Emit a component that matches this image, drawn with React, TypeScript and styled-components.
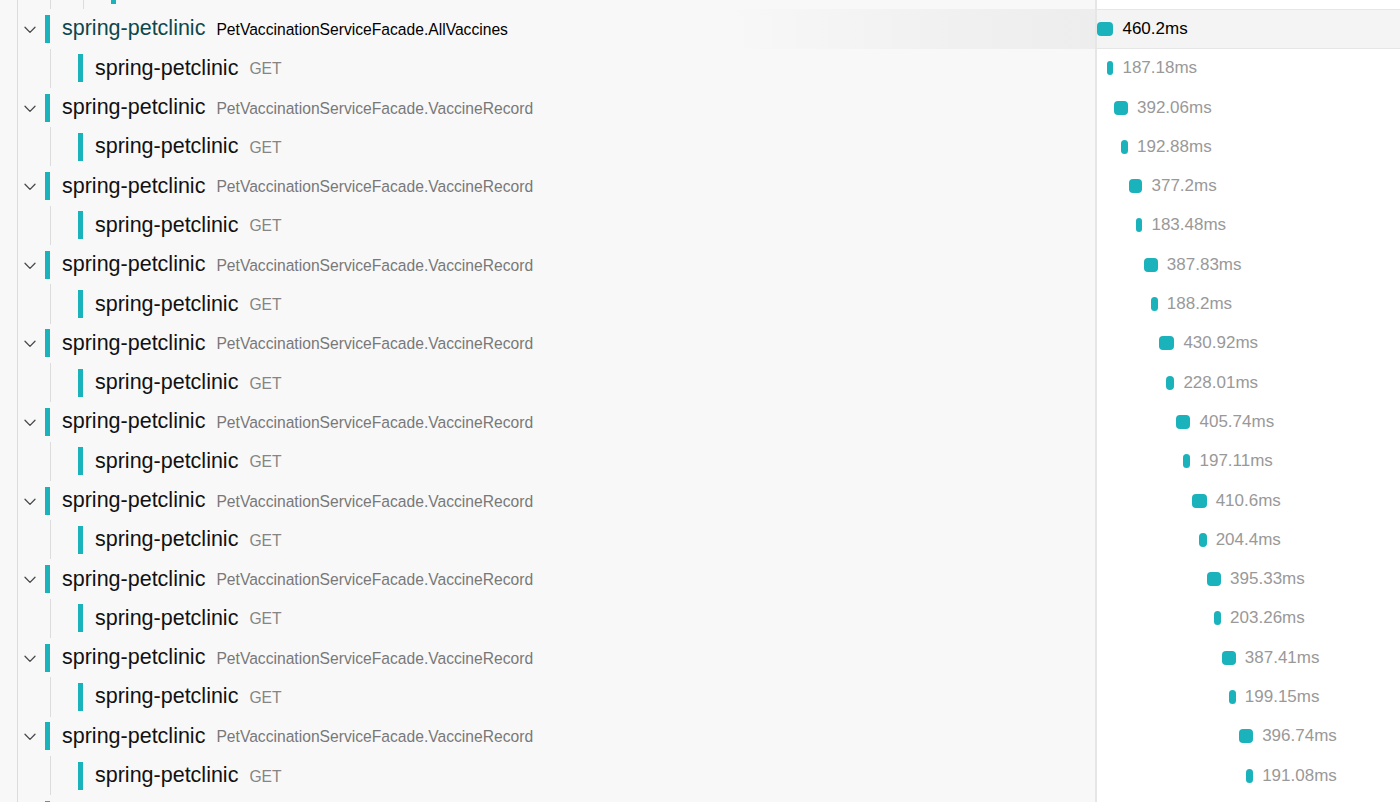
import React from 'react';
import styled, { createGlobalStyle, css } from 'styled-components';

const TEAL = '#1ab2bb';
const ROW_H = 39.3;

type Row = {
  depth: number;
  service: string;
  op: string;
  ms: number;
  offset: number;
  hasChildren?: boolean;
  hovered?: boolean;
  // row scrolled half out of view: only the tree lines and bar show
  clipped?: boolean;
};

const calls = [
  { op: 'PetVaccinationServiceFacade.AllVaccines', ms: 460.2, child: 187.18, offset: 0 },
  { op: 'PetVaccinationServiceFacade.VaccineRecord', ms: 392.06, child: 192.88, offset: 17 },
  { op: 'PetVaccinationServiceFacade.VaccineRecord', ms: 377.2, child: 183.48, offset: 32 },
  { op: 'PetVaccinationServiceFacade.VaccineRecord', ms: 387.83, child: 188.2, offset: 47 },
  { op: 'PetVaccinationServiceFacade.VaccineRecord', ms: 430.92, child: 228.01, offset: 62 },
  { op: 'PetVaccinationServiceFacade.VaccineRecord', ms: 405.74, child: 197.11, offset: 79 },
  { op: 'PetVaccinationServiceFacade.VaccineRecord', ms: 410.6, child: 204.4, offset: 95 },
  { op: 'PetVaccinationServiceFacade.VaccineRecord', ms: 395.33, child: 203.26, offset: 110 },
  { op: 'PetVaccinationServiceFacade.VaccineRecord', ms: 387.41, child: 199.15, offset: 125 },
  { op: 'PetVaccinationServiceFacade.VaccineRecord', ms: 396.74, child: 191.08, offset: 142 },
];

const PX_PER_MS = 1 / 28;
const barWidth = (ms: number) => Math.max(6, ms * PX_PER_MS);

const rows: Row[] = [
  { depth: 3, service: 'spring-petclinic', op: 'GET', ms: 181.4, offset: -8, clipped: true },
  ...calls.flatMap((c, i) => {
    const parentEnd = c.offset + barWidth(c.ms);
    return [
      {
        depth: 1,
        service: 'spring-petclinic',
        op: c.op,
        ms: c.ms,
        offset: c.offset,
        hasChildren: true,
        hovered: i === 0,
      },
      {
        depth: 2,
        service: 'spring-petclinic',
        op: 'GET',
        ms: c.child,
        offset: parentEnd - barWidth(c.child),
      },
    ];
  }),
  {
    depth: 1,
    service: 'spring-petclinic',
    op: 'PetVaccinationServiceFacade.VaccineRecord',
    ms: 401.2,
    offset: 157,
    hasChildren: true,
    clipped: true,
  },
];

const GlobalStyle = createGlobalStyle`
  html, body {
    margin: 0;
    padding: 0;
    background: #ffffff;
  }
  body {
    font-family: "Liberation Sans", Arial, Helvetica, sans-serif;
    -webkit-font-smoothing: antialiased;
  }
  * {
    box-sizing: border-box;
  }
`;

const Viewport = styled.div`
  height: 100vh;
  overflow: hidden;
  background: #f8f8f8;
`;

const TraceList = styled.div`
  margin-top: -30px;
  display: flex;
  flex-direction: column;
`;

const SpanRow = styled.div`
  display: flex;
  height: ${ROW_H}px;
  flex-shrink: 0;
`;

const NameCell = styled.div<{ $hovered?: boolean }>`
  width: 1095px;
  flex-shrink: 0;
  display: flex;
  align-items: center;
  padding-left: 17px;
  background: #f8f8f8;
  white-space: nowrap;
  overflow: hidden;

  ${(p) =>
    p.$hovered &&
    css`
      background: linear-gradient(to right, #f8f8f8 66%, #f0f0f0 88%, #ededed 100%);
    `}
`;

const Guide = styled.span`
  width: 33px;
  align-self: stretch;
  flex-shrink: 0;
  border-left: 1px solid #dcdcdc;
`;

const Toggle = styled.span`
  width: 28px;
  align-self: stretch;
  flex-shrink: 0;
  border-left: 1px solid #dcdcdc;
  display: flex;
  align-items: center;
  padding-left: 6px;
  padding-top: 2px;
  color: #4a4a4a;
`;

const ServiceBar = styled.span`
  width: 5px;
  height: 28px;
  flex-shrink: 0;
  background: ${TEAL};
  margin-right: 12px;
`;

const ServiceName = styled.span<{ $hovered?: boolean }>`
  font-size: 21.5px;
  color: ${(p) => (p.$hovered ? '#0c474d' : '#111111')};
`;

const OpName = styled.span<{ $hovered?: boolean; $leaf?: boolean }>`
  margin-left: 11px;
  font-size: 15.65px;
  padding-top: 2px;
  color: ${(p) => (p.$hovered ? '#000000' : p.$leaf ? '#858585' : '#787878')};
`;

const DurationCell = styled.div<{ $hovered?: boolean }>`
  flex: 1;
  display: flex;
  align-items: center;
  border-left: 2px solid #e6e6e6;
  background: #ffffff;
  white-space: nowrap;

  ${(p) =>
    p.$hovered &&
    css`
      background: #f4f4f4;
      border-top: 1px solid #e6e6e6;
      border-bottom: 1px solid #e6e6e6;
    `}
`;

const DurationBar = styled.span`
  height: 14px;
  flex-shrink: 0;
  border-radius: 4px;
  background: ${TEAL};
`;

const DurationLabel = styled.span<{ $hovered?: boolean }>`
  margin-left: 9px;
  font-size: 17px;
  color: ${(p) => (p.$hovered ? '#000000' : '#999999')};
`;

function Chevron() {
  return (
    <svg width="12" height="8" viewBox="0 0 12 8" fill="none">
      <path d="M1 1.2 L6 6.4 L11 1.2" stroke="currentColor" strokeWidth="1.3" strokeLinecap="round" strokeLinejoin="round" />
    </svg>
  );
}

function TraceRow({ row }: { row: Row }) {
  const guides = Array.from({ length: row.depth - 1 });
  return (
    <SpanRow>
      <NameCell $hovered={row.hovered}>
        {guides.map((_, i) => (
          <Guide key={i} />
        ))}
        <Toggle>{row.hasChildren && <Chevron />}</Toggle>
        <ServiceBar />
        {!row.clipped && (
          <>
            <ServiceName $hovered={row.hovered}>{row.service}</ServiceName>
            <OpName $hovered={row.hovered} $leaf={!row.hasChildren}>
              {row.op}
            </OpName>
          </>
        )}
      </NameCell>
      <DurationCell $hovered={row.hovered}>
        {!row.clipped && (
          <>
            <DurationBar style={{ marginLeft: row.offset, width: barWidth(row.ms) }} />
            <DurationLabel $hovered={row.hovered}>{row.ms}ms</DurationLabel>
          </>
        )}
      </DurationCell>
    </SpanRow>
  );
}

export default function App() {
  return (
    <Viewport>
      <GlobalStyle />
      <TraceList>
        {rows.map((row, i) => (
          <TraceRow key={i} row={row} />
        ))}
      </TraceList>
    </Viewport>
  );
}
